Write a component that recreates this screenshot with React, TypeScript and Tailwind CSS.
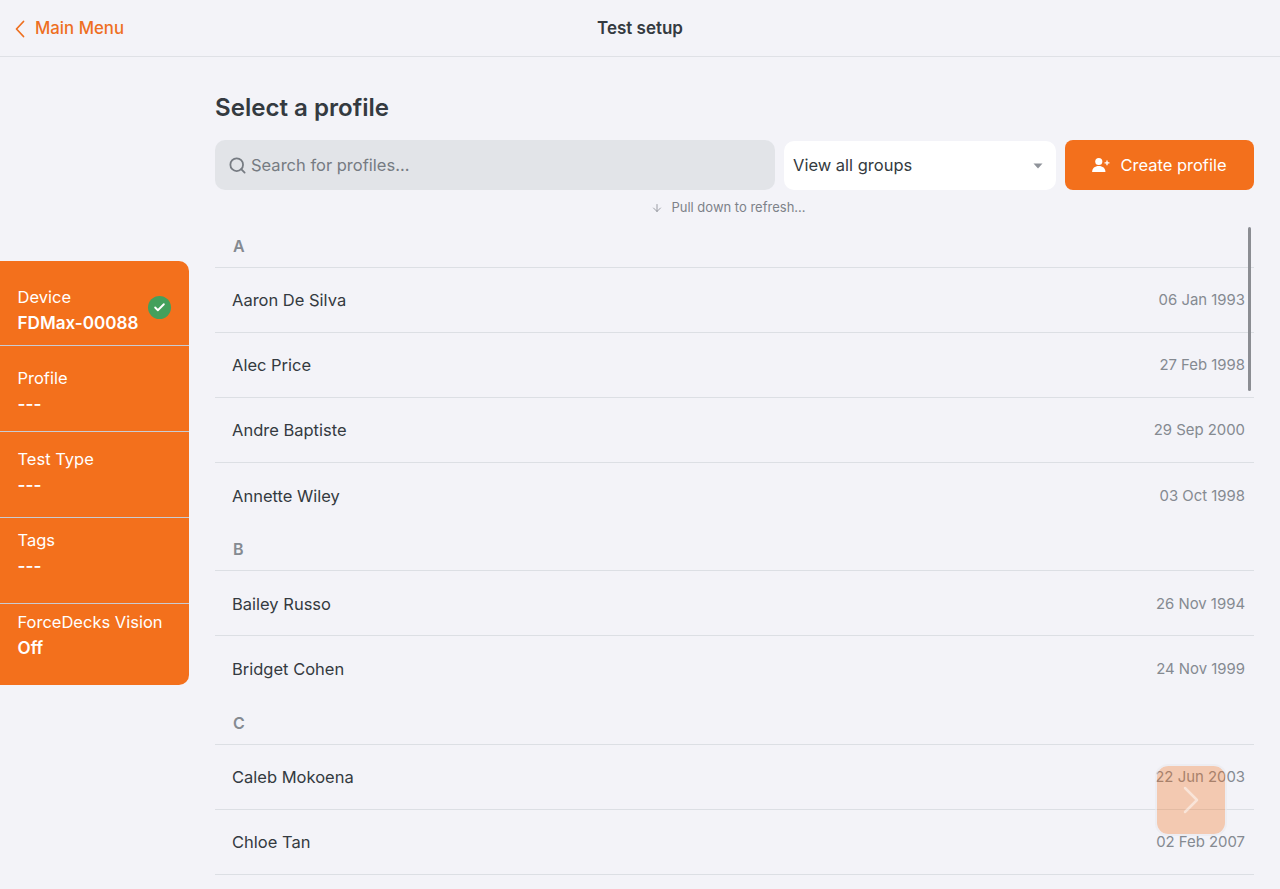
import React from "react";
import { Search, ArrowDown, Check } from "lucide-react";

const sections = [
  {
    letter: "A",
    people: [
      { name: "Aaron De Silva", dob: "06 Jan 1993" },
      { name: "Alec Price", dob: "27 Feb 1998" },
      { name: "Andre Baptiste", dob: "29 Sep 2000" },
      { name: "Annette Wiley", dob: "03 Oct 1998" },
    ],
  },
  {
    letter: "B",
    people: [
      { name: "Bailey Russo", dob: "26 Nov 1994" },
      { name: "Bridget Cohen", dob: "24 Nov 1999" },
    ],
  },
  {
    letter: "C",
    people: [
      { name: "Caleb Mokoena", dob: "22 Jun 2003" },
      { name: "Chloe Tan", dob: "02 Feb 2007" },
    ],
  },
];

const steps = [
  { label: "Device", value: "FDMax-00088", check: true, box: "h-[85px] pt-[23.5px]" },
  { label: "Profile", value: "---", box: "h-[86px] pt-[19.5px]" },
  { label: "Test Type", value: "---", box: "h-[86px] pt-[14.5px]" },
  { label: "Tags", value: "---", box: "h-[86px] pt-[9.5px]" },
  { label: "ForceDecks Vision", value: "Off", box: "h-[81px] pt-[5.5px]" },
];

const App = () => {
  return (
    <div className="relative h-[889px] overflow-hidden bg-[#f3f3f8] font-['Inter',sans-serif] text-[#343a40]">
      <header className="relative flex h-[57px] items-center justify-center border-b-[1.5px] border-[#dfe1e6] pt-[2px]">
        <div className="absolute left-[15px] top-0 flex h-[56px] items-center pt-[1px] text-[#ee6f1f]">
          <svg width="10" height="18" viewBox="0 0 10 18" fill="none" stroke="currentColor" strokeWidth="1.750" strokeLinecap="round" strokeLinejoin="round">
            <path d="M8.500 1.500 1.500 9l7 7.500" />
          </svg>
          <span className="ml-[10px] text-[16.8px] font-medium">Main Menu</span>
        </div>
        <span className="text-[17px] font-semibold">Test setup</span>
      </header>

      <div className="flex">
        <aside className="w-[215px] shrink-0 pt-[204px]">
          <div className="w-[189px] overflow-hidden rounded-r-[10px] bg-[#f3701c] text-white">
            {steps.map((s, i) => (
              <div
                key={s.label}
                className={`relative flex flex-col pl-[17.5px] ${s.box} ${i < steps.length - 1 ? "border-b-[1.5px] border-[#c9ccd2]" : ""}`}
              >
                <span className="text-[16.5px] leading-[24.5px]">{s.label}</span>
                <span className="mt-[1.5px] text-[17.1px] font-semibold leading-[24.5px]">{s.value}</span>
                {s.check && (
                  <span className="absolute left-[148px] top-[35px] flex h-[23px] w-[23px] items-center justify-center rounded-full bg-[#43a05c]">
                    <Check size={13} strokeWidth={3.5} />
                  </span>
                )}
              </div>
            ))}
          </div>
        </aside>

        <main className="relative w-[1039px] shrink-0">
          <h1 className="mt-[35px] text-[24.1px] font-semibold leading-[32px]">Select a profile</h1>
          <div className="mt-[16px] flex items-center">
            <div className="flex h-[50px] w-[560px] items-center rounded-[10px] bg-[#e2e4e8] pl-[13px] text-[#767b82]">
              <Search size={19} strokeWidth={2.25} />
              <span className="ml-[4px] pt-[1px] text-[16.5px]">Search for profiles...</span>
            </div>
            <div className="ml-[9px] flex h-[49px] w-[272px] items-center justify-between rounded-[10px] bg-white pl-[9px] pr-[13px]">
              <span className="pt-[1px] text-[16.5px]">View all groups</span>
              <svg width="10" height="6" viewBox="0 0 10 6" className="mt-[2px]">
                <path d="M0.500 0.500h9L5 5.500z" fill="#8f939a" />
              </svg>
            </div>
            <div className="ml-[9px] flex h-[50px] w-[189px] items-center justify-center rounded-[8px] bg-[#f3701c] text-white">
              <svg width="18" height="16" viewBox="0 0 20 18" fill="currentColor">
                <circle cx="7.500" cy="5" r="4" />
                <path d="M0 17c0-4.500 3-7 7.500-7s7.500 2.500 7.500 7z" />
                <path d="M16 4h1.500v2H19.500v1.300H17.500v2H16v-2h-2V6h2z" />
              </svg>
              <span className="ml-[10px] pt-[1px] text-[16.5px]">Create profile</span>
            </div>
          </div>
          <div className="mt-[9px] flex h-[17px] items-center justify-center pr-[12px] text-[13px] text-[#7d8289]">
            <ArrowDown size={12} strokeWidth={1.5} />
            <span className="ml-[8px]">Pull down to refresh...</span>
          </div>

          <div className="mt-[8px]">
            {sections.map((section) => (
              <div key={section.letter}>
                <div className="flex h-[43.5px] items-center border-b-[1.5px] border-[#dcdfe4] pl-[18px] pt-[1px] text-[16px] font-semibold text-[#858a91]">
                  {section.letter}
                </div>
                {section.people.map((p, i) => (
                  <div
                    key={p.name}
                    className={`flex h-[65px] items-center justify-between pl-[17px] pr-[9px] pt-[2px] ${
                      i < section.people.length - 1 || section.letter === "C" ? "border-b-[1.5px] border-[#dcdfe4]" : ""
                    }`}
                  >
                    <span className="text-[16.5px]">{p.name}</span>
                    <span className="text-[14.9px] text-[#858a91]">{p.dob}</span>
                  </div>
                ))}
              </div>
            ))}
          </div>

          <div className="absolute left-[1033px] top-[170px] h-[164px] w-[3px] rounded-full bg-[#8b8d93]" />
        </main>
      </div>

      <div className="absolute left-[1155px] top-[764px] flex h-[72px] w-[72px] items-center justify-center rounded-[13px] border-2 border-[#e9e9ee]/60 bg-[#f3701c]/32 bg-clip-padding text-white/50">
        <svg width="16" height="28" viewBox="0 0 16 28" fill="none" stroke="currentColor" strokeWidth="2.500" strokeLinecap="round" strokeLinejoin="round">
          <path d="M2 2l12 12L2 26" />
        </svg>
      </div>
    </div>
  );
};

export default App;
